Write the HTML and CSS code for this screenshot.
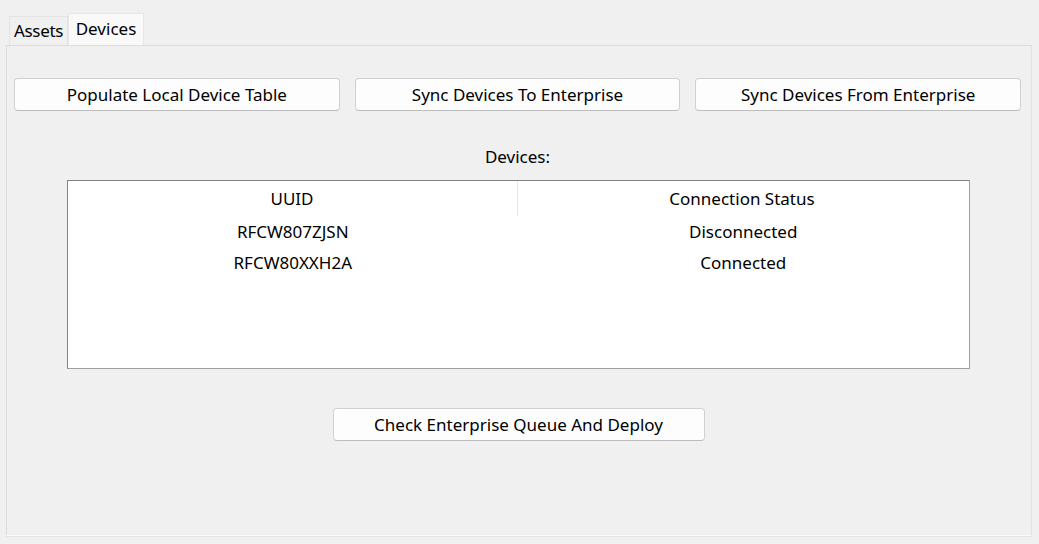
FILE: index.html
```html
<!DOCTYPE html>
<html lang="en">
<head>
    <meta charset="UTF-8">
    <title>Devices</title>
    <link rel="stylesheet" href="styles.css">
</head>
<body>
    <div class="janela">
        <div class="abas">
            <div class="aba">Assets</div>
            <div class="aba ativa">Devices</div>
        </div>
        <div class="painel">
            <div class="acoes">
                <button>Populate Local Device Table</button>
                <button>Sync Devices To Enterprise</button>
                <button>Sync Devices From Enterprise</button>
            </div>
            <div class="rotulo">Devices:</div>
            <div class="tabela">
                <div class="cabecalho">
                    <div class="col">UUID</div>
                    <div class="col">Connection Status</div>
                </div>
                <div class="linha">
                    <div class="col">RFCW807ZJSN</div>
                    <div class="col">Disconnected</div>
                </div>
                <div class="linha">
                    <div class="col">RFCW80XXH2A</div>
                    <div class="col">Connected</div>
                </div>
            </div>
            <div class="rodape">
                <button class="deploy">Check Enterprise Queue And Deploy</button>
            </div>
        </div>
    </div>
</body>
</html>
```

FILE: styles.css
```css
html, body {
    margin: 0;
    height: 100%;
    background-color: #f0f0f0;
}
body {
    font-family: 'Noto Sans', 'Open Sans', sans-serif;
    font-size: 17px;
    color: #000;
}
.janela {
    display: flex;
    flex-direction: column;
    height: 100%;
    padding: 13px 7px 8px 6px;
    box-sizing: border-box;
}
.abas {
    display: flex;
    align-items: flex-end;
    padding-left: 3px;
    height: 32px;
}
.aba {
    width: 59px;
    height: 29px;
    box-sizing: border-box;
    text-align: center;
    line-height: 27px;
    border: 1px solid #e3e3e3;
    border-bottom: none;
    background-color: #f0f0f0;
    white-space: nowrap;
    letter-spacing: -0.3px;
}
.aba.ativa {
    width: 76px;
    height: 33px;
    margin-bottom: -1px;
    line-height: 30px;
    background-color: #f9f9f9;
    border-color: #e6e6e6;
    letter-spacing: 0;
}
.painel {
    flex: 1;
    border: 1px solid #dcdcdc;
    border-right-color: #e2e2e2;
    border-bottom-color: #fafafa;
    box-shadow: 0 1px 0 #e4e4e4;
    display: flex;
    flex-direction: column;
    padding: 32px 10px 0 7px;
}
.acoes {
    display: flex;
    gap: 15px;
}
button {
    font-family: inherit;
    font-size: 17px;
    color: #000;
    height: 33px;
    background-color: #fdfdfd;
    border: 1px solid #d0d0d0;
    border-bottom-color: #bdbdbd;
    border-radius: 4px;
    padding: 0 10px;
}
.acoes button {
    flex: 1;
}
.rotulo {
    text-align: center;
    margin-top: 35px;
    height: 22px;
    line-height: 22px;
}
.tabela {
    align-self: center;
    width: 903px;
    height: 189px;
    box-sizing: border-box;
    margin-top: 12px;
    background-color: #fff;
    border: 1px solid #828282;
    border-right-color: #a0a0a0;
    border-bottom-color: #a0a0a0;
    margin-left: 1px;
}
.cabecalho, .linha {
    display: flex;
}
.col {
    flex: 1;
    text-align: center;
}
.cabecalho {
    height: 35px;
    margin-right: 2px;
}
.cabecalho .col {
    line-height: 35px;
}
.cabecalho .col:first-child {
    border-right: 1px solid #e5e5e5;
}
.linha .col {
    line-height: 31px;
}
.rodape {
    display: flex;
    justify-content: center;
    margin-top: 39px;
}
.deploy {
    width: 372px;
    margin-left: 2px;
}
```
